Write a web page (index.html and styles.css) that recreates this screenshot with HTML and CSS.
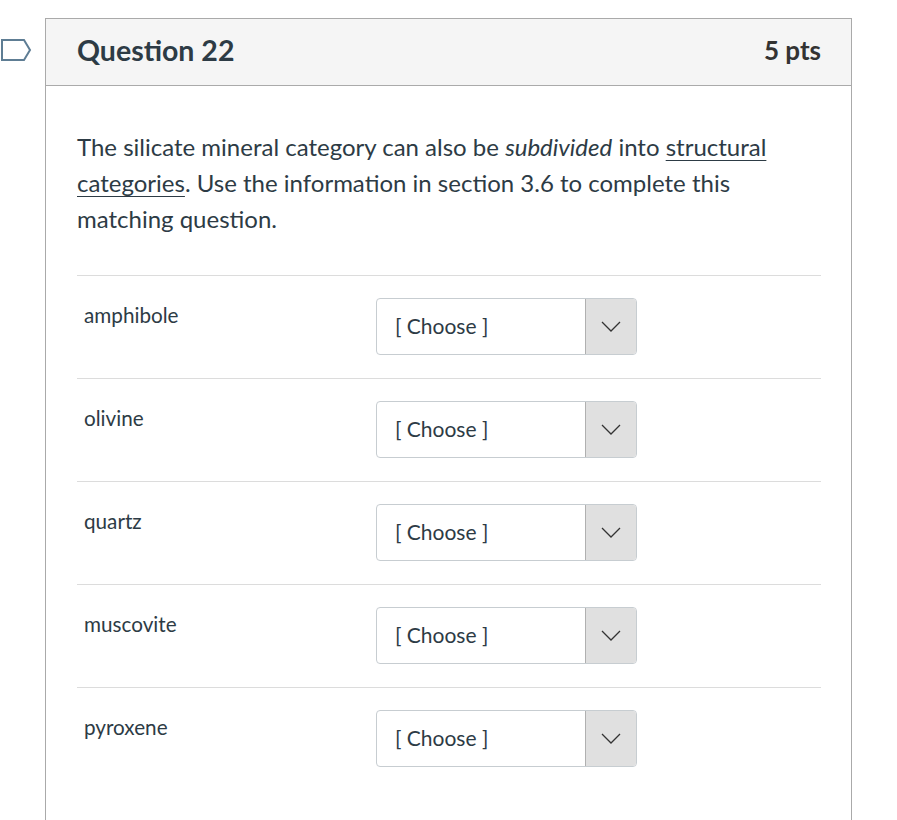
FILE: index.html
```html
<!DOCTYPE html>
<html>
<head>
<meta charset="utf-8">
<link rel="stylesheet" href="styles.css">
</head>
<body>
<div class="card">
  <svg class="flag" width="34" height="26" viewBox="0 0 34 26"><path d="M2 2 H24 L30 12 L24 22 H2 Z" fill="none" stroke="#5e7d94" stroke-width="2"/></svg>
  <div class="header">
    <h2 class="title">Question 22</h2>
    <div class="pts">5 pts</div>
  </div>
  <div class="body">
    <p class="text">The silicate mineral category can also be <em>subdivided</em> into <u>structural categories</u>. Use the information in section 3.6 to complete this matching question.</p>
    <div class="rows">
      <div class="row"><div class="label">amphibole</div><div class="select"><span class="val">[ Choose ]</span><span class="arrow"><svg width="20" height="12" viewBox="0 0 20 12"><path d="M1 1 L10 10 L19 1" fill="none" stroke="#333" stroke-width="1.3"/></svg></span></div></div>
      <div class="row"><div class="label">olivine</div><div class="select"><span class="val">[ Choose ]</span><span class="arrow"><svg width="20" height="12" viewBox="0 0 20 12"><path d="M1 1 L10 10 L19 1" fill="none" stroke="#333" stroke-width="1.3"/></svg></span></div></div>
      <div class="row"><div class="label">quartz</div><div class="select"><span class="val">[ Choose ]</span><span class="arrow"><svg width="20" height="12" viewBox="0 0 20 12"><path d="M1 1 L10 10 L19 1" fill="none" stroke="#333" stroke-width="1.3"/></svg></span></div></div>
      <div class="row"><div class="label">muscovite</div><div class="select"><span class="val">[ Choose ]</span><span class="arrow"><svg width="20" height="12" viewBox="0 0 20 12"><path d="M1 1 L10 10 L19 1" fill="none" stroke="#333" stroke-width="1.3"/></svg></span></div></div>
      <div class="row"><div class="label">pyroxene</div><div class="select"><span class="val">[ Choose ]</span><span class="arrow"><svg width="20" height="12" viewBox="0 0 20 12"><path d="M1 1 L10 10 L19 1" fill="none" stroke="#333" stroke-width="1.3"/></svg></span></div></div>
    </div>
  </div>
</div>
</body>
</html>
```
FILE: styles.css
```css
html, body { margin: 0; padding: 0; background: #fff; }
body { font-family: Lato, "Liberation Sans", sans-serif; color: #2d3b45; }
.card {
  position: relative;
  margin: 18px 0 0 45px;
  width: 807px;
  box-sizing: border-box;
  border: 1px solid #aaaaaa;
  border-bottom: none;
  min-height: 810px;
}
.flag { position: absolute; left: -46px; top: 19px; }
.header {
  display: flex;
  align-items: center;
  justify-content: space-between;
  height: 67px;
  box-sizing: border-box;
  padding: 0 30px 0 31px;
  background: #f5f5f5;
  border-bottom: 1px solid #aaaaaa;
}
.title { margin: 0; font-size: 28.5px; font-weight: 700; color: #2d3b45; position: relative; top: -2px; }
.pts { font-size: 26px; font-weight: 700; color: #333; position: relative; top: -2px; }
.body { padding: 43px 30px 0 31px; }
.text { margin: 0; font-size: 24px; line-height: 36px; }
.text u { text-decoration-thickness: 1px; text-underline-offset: 4px; }
.rows { margin-top: 38px; }
.row {
  display: flex;
  align-items: flex-start;
  height: 103px;
  box-sizing: border-box;
  border-top: 1px solid #dcdcdc;
  padding-top: 22px;
}
.label { width: 292px; padding-left: 7px; font-size: 20.7px; line-height: 36px; margin-top: -1px; }
.select {
  display: flex;
  width: 261px;
  height: 57px;
  box-sizing: border-box;
  border: 1px solid #c7cdd1;
  border-radius: 4px;
  overflow: hidden;
  background: #fff;
}
.val { flex: 1; display: flex; align-items: center; padding: 0 0 2px 18px; font-size: 21px; color: #2d3b45; }
.arrow {
  width: 50px;
  display: flex;
  align-items: center;
  justify-content: center;
  background: #e0e0e0;
  border-left: 1px solid #b0b0b0;
}
```
